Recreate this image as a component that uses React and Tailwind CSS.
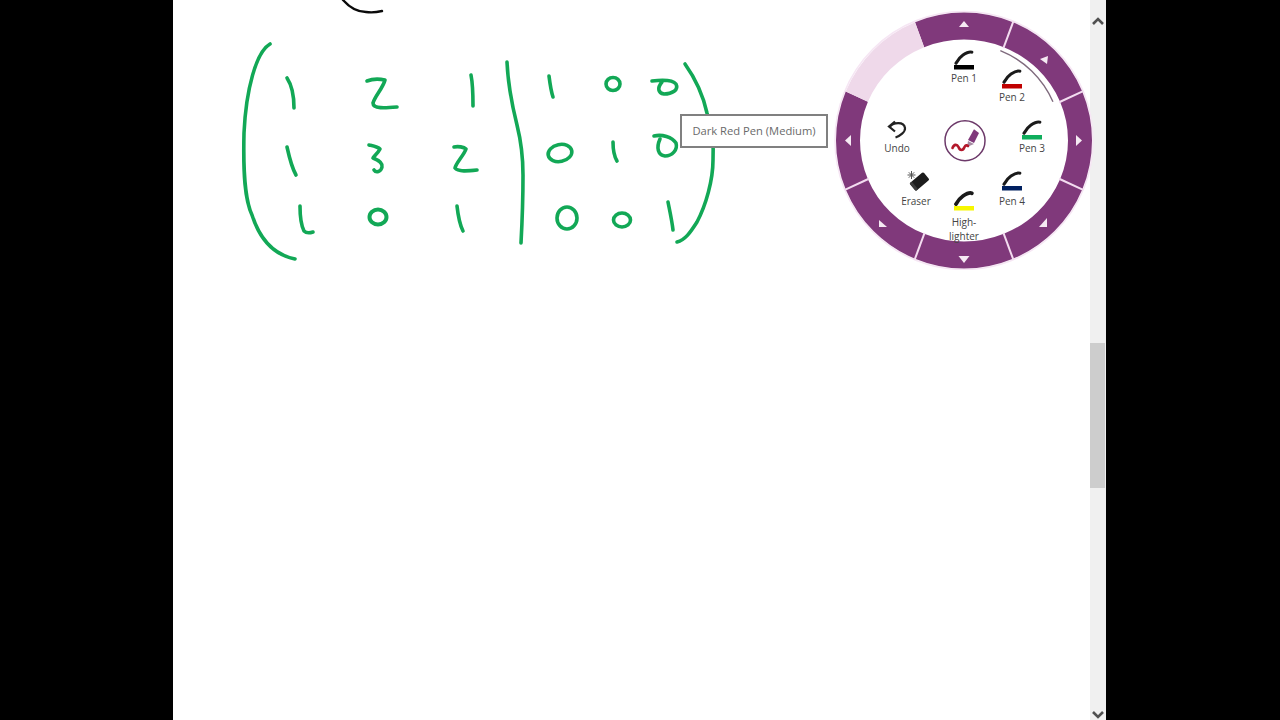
import React from 'react';

const CX = 964;
const CY = 140.5;
const OUTER = [128, 128];
const INNER = [104, 101];

const polar = ([rx, ry], deg) => {
  const a = ((deg - 90) * Math.PI) / 180;
  return [CX + rx * Math.cos(a), CY + ry * Math.sin(a)];
};

const wedge = (from, to) => {
  const [x1, y1] = polar(OUTER, from);
  const [x2, y2] = polar(OUTER, to);
  const [x3, y3] = polar(INNER, to);
  const [x4, y4] = polar(INNER, from);
  return `M${x1} ${y1} A${OUTER[0]} ${OUTER[1]} 0 0 1 ${x2} ${y2} L${x3} ${y3} A${INNER[0]} ${INNER[1]} 0 0 0 ${x4} ${y4} Z`;
};

const arc = (r, from, to) => {
  const [x1, y1] = polar([r, r], from);
  const [x2, y2] = polar([r, r], to);
  return `M${x1} ${y1} A${r} ${r} 0 0 1 ${x2} ${y2}`;
};

const ink = [
  // left bracket
  'M270 44 C256 52 246 90 244 133 C243 175 245 200 252 215 C260 240 275 255 295 259',
  // row 1
  'M287 78 C291 84 294 95 294 108',
  'M367 81 C372 79 380 79 385 80 C383 88 375 96 373 103 C373 109 385 108 397 107',
  'M471 75 C473 85 473 96 473 106',
  // row 2
  'M287 147 C289 156 292 168 296 175',
  'M369 145 C373 146 378 147 380 149 C378 153 374 156 373 158 C378 160 383 163 382 167 C381 172 376 173 374 170',
  'M454 147 C458 146 464 147 466 149 C464 155 456 163 455 168 C458 172 468 171 477 170',
  // row 3
  'M300 206 C300 215 301 225 304 231 C306 233 310 233 313 232',
  'M457 206 C458 215 460 225 463 231',
  // divider
  'M507 62 C508 85 512 105 517 125 C522 145 523 160 523 175 C523 200 522 225 521 243',
  // right side
  'M549 76 C550 84 551 91 553 97',
  'M652 81 C660 80 672 79 676 84 C679 90 672 94 664 94 C658 93 657 88 662 82',
  'M613 142 C613 150 614 156 617 161',
  'M654 136 C662 134 672 137 676 143 C678 150 672 156 665 156 C658 155 656 148 660 139',
  'M668 202 C670 212 672 221 673 230',
  // right bracket
  'M685 64 C695 78 703 95 707 113 C712 130 714 145 713 160 C713 180 706 205 697 222 C690 233 685 240 677 242',
];

const pens = [
  { label: ['Pen 1'], bar: '#000000', pos: 'left-[100px] top-[40px]', gap: 'mb-[1px]', weight: 3.1 },
  { label: ['Pen 2'], bar: '#c00000', pos: 'left-[148px] top-[59px]', gap: 'mb-[1px]', weight: 3.1 },
  { label: ['Pen 3'], bar: '#0fae5c', pos: 'left-[168px] top-[110px]', gap: 'mb-[1px]', weight: 3.1 },
  { label: ['Pen 4'], bar: '#002060', pos: 'left-[148px] top-[161px]', gap: 'mb-[3px]', weight: 3.1 },
  { label: ['High-', 'lighter'], bar: '#f7f700', pos: 'left-[100px] top-[181px]', gap: 'mb-[4px]', weight: 3.8 },
];

const PenButton = ({ label, bar, pos, gap, weight }) => (
  <div className={`absolute ${pos} w-[60px] flex flex-col items-center text-[10px] leading-[14px] text-[#444444]`}>
    <svg width="20" height="20" viewBox="0 0 20 20" className={gap}>
      <path
        d="M2 13.2 C4 9.5 6 7 9 5 C12 3 15 1 17.8 2.2"
        fill="none"
        stroke="#1a1a1a"
        strokeWidth={weight}
        strokeLinecap="round"
      />
      <rect x="0" y="15" width="20" height="4.5" fill={bar} />
    </svg>
    {label.map((line) => (
      <span key={line}>{line}</span>
    ))}
  </div>
);

const Wheel = () => (
  <div className="absolute left-[661px] top-[10px] z-10 w-[260px] h-[260px] font-['Open_Sans',sans-serif]">
    <svg width="260" height="260" viewBox="834 10 260 260" className="absolute inset-0">
      <circle cx={CX} cy={CY} r="129" fill="#ffffff" stroke="#f6e6f4" strokeWidth="1.5" />
      {[0, 45, 90, 135, 180, 225, 270].map((deg) => (
        <path key={deg} d={wedge(deg - 22.5, deg + 22.5)} fill="#80397b" />
      ))}
      <path d={wedge(292.5, 337.5)} fill="#efd9ea" />
      {[22.5, 67.5, 112.5, 157.5, 202.5, 247.5].map((deg) => {
        const [x1, y1] = polar([INNER[0] - 1, INNER[1] - 1], deg);
        const [x2, y2] = polar([OUTER[0] + 1, OUTER[1] + 1], deg);
        return <line key={deg} x1={x1} y1={y1} x2={x2} y2={y2} stroke="#f3dcf0" strokeWidth="2" />;
      })}
      <path d={arc(97, 22, 66.5)} fill="none" stroke="#7f6a7d" strokeWidth="1.4" />

      {/* ring arrows */}
      <g fill="#f5eaf3">
        <polygon points="964,21 969,27 959,27" />
        <polygon points="1082,140.5 1076,135 1076,146" />
        <polygon points="964,263 958.5,256 969.5,256" />
        <polygon points="845,140.5 851,135 851,146" />
        <polygon points="1048,56 1047,64 1040,59" />
        <polygon points="1047,218 1047,227 1039,227" />
        <polygon points="879,220 887,227 879,227" />
      </g>

      {/* undo */}
      <path
        d="M895 121.5 L889 126.5 L895 131.5 M890 126.5 C893 122.5 904 121 905 128 C905.5 132 900 136 895.5 137.5"
        fill="none"
        stroke="#222222"
        strokeWidth="2.2"
      />

      {/* eraser */}
      <g transform="rotate(-40 919.5 181.5)">
        <rect x="910.5" y="176.5" width="18" height="10" rx="1.5" fill="#1c1c1c" />
        <rect x="910.5" y="176.5" width="3" height="10" rx="1" fill="#3a3a3a" />
      </g>
      <path
        d="M911.5 171 V179 M907.5 175 H915.5 M908.8 172.3 L914.2 177.7 M914.2 172.3 L908.8 177.7"
        stroke="#555555"
        strokeWidth="1"
      />

      {/* current tool */}
      <circle cx="965" cy="140.7" r="20" fill="#ffffff" stroke="#6d3a6a" strokeWidth="1.5" />
      <polygon points="974,129.3 979,133 974,143 968,140" fill="#80397b" />
      <polygon points="968,141 974,144 967,147" fill="#a58aa3" />
      <path
        d="M952.5 148 C954 144 957 144 958.5 147 C960 151 963 151 964.5 147 C965.5 145 967 145 968 146"
        fill="none"
        stroke="#b3182b"
        strokeWidth="2.6"
        strokeLinecap="round"
      />
    </svg>

    {pens.map((p) => (
      <PenButton key={p.label[0]} {...p} />
    ))}

    <span className="absolute left-[33px] top-[131px] w-[60px] text-center text-[10px] leading-[14px] text-[#444444]">
      Undo
    </span>
    <span className="absolute left-[52px] top-[184px] w-[60px] text-center text-[10px] leading-[14px] text-[#444444]">
      Eraser
    </span>
  </div>
);

const Scrollbar = () => (
  <div className="flex flex-col w-[16px] h-full pt-[16px] bg-[#f0f0f0]">
    <svg width="16" height="10" viewBox="0 0 16 10">
      <path d="M3 8 L8 3 L13 8" fill="none" stroke="#505050" strokeWidth="2.6" />
    </svg>
    <div className="mt-[317px] w-[15px] h-[145px] bg-[#cdcdcd]" />
    <svg width="16" height="10" viewBox="0 0 16 10" className="mt-auto">
      <path d="M3 2 L8 7 L13 2" fill="none" stroke="#505050" strokeWidth="2.6" />
    </svg>
  </div>
);

const App = () => (
  <div className="flex w-[1280px] h-[720px] overflow-hidden bg-black">
    <div className="w-[173px] shrink-0" />
    <main className="relative w-[917px] shrink-0 bg-white">
      <svg width="917" height="720" viewBox="173 0 917 720" className="absolute inset-0">
        <path d="M343 0 C350 8 358 12 366 12 C372 13 378 12 382 11" fill="none" stroke="#0a0a0a" strokeWidth="2.4" strokeLinecap="round" />
        <g fill="none" stroke="#12a856" strokeWidth="3.6" strokeLinecap="round" strokeLinejoin="round">
          {ink.map((d) => (
            <path key={d} d={d} />
          ))}
          <ellipse cx="378" cy="217" rx="8.5" ry="7.5" strokeWidth="4" />
          <ellipse cx="613" cy="84" rx="7" ry="6.5" strokeWidth="3.6" />
          <ellipse cx="560" cy="153" rx="12" ry="8.5" transform="rotate(-12 560 153)" />
          <ellipse cx="567" cy="218" rx="10" ry="11" />
          <ellipse cx="622" cy="220" rx="8.5" ry="7" strokeWidth="3.6" />
        </g>
      </svg>

      <div className="absolute left-[507px] top-[114px] w-[148px] h-[34px] flex items-center justify-center bg-white border-2 border-[#808080] font-['Open_Sans',sans-serif] text-[11.2px] text-[#6a6a6a]">
        Dark Red Pen (Medium)
      </div>

      <Wheel />
    </main>
    <Scrollbar />
    <div className="flex-1" />
  </div>
);

export default App;
